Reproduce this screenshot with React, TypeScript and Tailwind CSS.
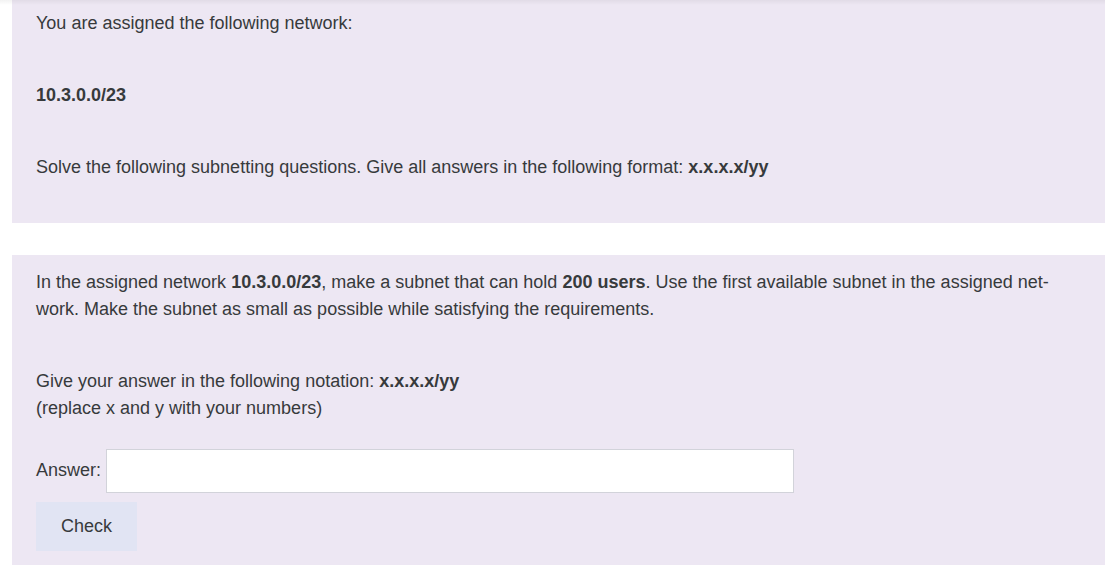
import React from "react";

export default function App() {
  return (
    <div
      className="relative min-h-[579px] bg-white text-[18px] leading-[27px] text-[#373a3c]"
      style={{ fontFamily: '"Liberation Sans", Arial, sans-serif' }}
    >
      <div className="pointer-events-none absolute left-0 right-0 top-0 h-[5px] bg-gradient-to-b from-[rgba(0,0,0,0.05)] to-transparent" />
      <div className="ml-[12px] bg-[#ede7f3] pl-[24px] pr-[24px] pt-[10px] pb-[42px]">
        <p>You are assigned the following network:</p>
        <p className="mt-[45px] font-bold">10.3.0.0/23</p>
        <p className="mt-[45px]">
          Solve the following subnetting questions. Give all answers in the following format: <b>x.x.x.x/yy</b>
        </p>
      </div>
      <div className="ml-[12px] mt-[32px] bg-[#ede7f3] pl-[24px] pr-[20px] pt-[14px] pb-[14px]">
        <p className="whitespace-nowrap">
          In the assigned network <b>10.3.0.0/23</b>, make a subnet that can hold <b>200 users</b>. Use the first available subnet in the assigned net-
          <br />
          work. Make the subnet as small as possible while satisfying the requirements.
        </p>
        <p className="mt-[45px]">
          Give your answer in the following notation: <b>x.x.x.x/yy</b>
          <br />
          (replace x and y with your numbers)
        </p>
        <div className="mt-[27px] flex items-center gap-[5px]">
          <span className="-mt-[2px]">Answer:</span>
          <input
            type="text"
            className="h-[44px] w-[688px] border border-[#d2d3da] bg-white px-2 outline-none"
          />
        </div>
        <button className="mt-[9px] h-[49px] w-[101px] bg-[#e1e4f3] text-[#373a3c]">Check</button>
      </div>
    </div>
  );
}
